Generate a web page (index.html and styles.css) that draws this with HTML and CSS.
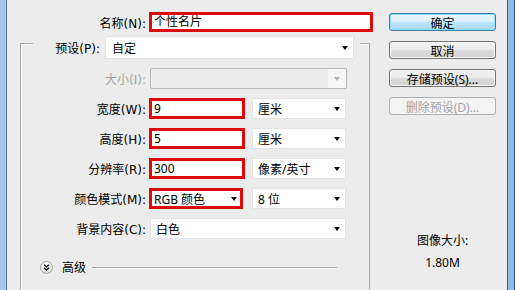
FILE: index.html
```html
<!DOCTYPE html>
<html lang="zh-CN">
  <head>
    <meta charset="UTF-8" />
    <title>新建</title>
    <link rel="stylesheet" href="styles.css">
  </head>
  <body>
    <div class="window">
      <div class="client">
        <!-- left: the form -->
        <div class="form">
          <div class="row name-row">
            <label class="lbl">名称(N):</label>
            <div class="field mark name">个性名片</div>
          </div>
          <div class="group">
            <div class="legend">
              <label class="lbl">预设(P):</label>
              <div class="select preset">自定<span class="arrow"></span></div>
            </div>
            <div class="rows">
              <div class="row">
                <label class="lbl off">大小(I):</label>
                <div class="select disabled size"><span class="arrow"></span></div>
              </div>
              <div class="row">
                <label class="lbl">宽度(W):</label>
                <div class="field mark num">9</div>
                <div class="select unit">厘米<span class="arrow"></span></div>
              </div>
              <div class="row">
                <label class="lbl">高度(H):</label>
                <div class="field mark num">5</div>
                <div class="select unit">厘米<span class="arrow"></span></div>
              </div>
              <div class="row">
                <label class="lbl">分辨率(R):</label>
                <div class="field mark num">300</div>
                <div class="select unit">像素/英寸<span class="arrow"></span></div>
              </div>
              <div class="row">
                <label class="lbl">颜色模式(M):</label>
                <div class="select mark mode">RGB 颜色<span class="arrow"></span></div>
                <div class="select unit bits">8 位<span class="arrow"></span></div>
              </div>
              <div class="row">
                <label class="lbl">背景内容(C):</label>
                <div class="select bg">白色<span class="arrow"></span></div>
              </div>
            </div>
            <div class="advanced">
              <svg class="toggle" width="13" height="13" viewBox="0 0 13 13">
                <defs>
                  <linearGradient id="knob" x1="0" y1="0" x2="0" y2="1">
                    <stop offset="0" stop-color="#ffffff" />
                    <stop offset="1" stop-color="#dedede" />
                  </linearGradient>
                </defs>
                <circle cx="6.5" cy="6.5" r="6" fill="url(#knob)" stroke="#a0a0a0" />
                <path d="M4 3.6 L6.5 6 L9 3.6 M4 6.8 L6.5 9.2 L9 6.8" fill="none" stroke="#111" stroke-width="1.3" />
              </svg>
              <span class="adv-text">高级</span>
              <span class="rule"></span>
            </div>
          </div>
        </div>

        <!-- right: buttons and size -->
        <div class="side">
          <button class="btn default">确定</button>
          <button class="btn">取消</button>
          <button class="btn">存储预设(S)...</button>
          <button class="btn" disabled>删除预设(D)...</button>
          <div class="info">
            <p>图像大小:</p>
            <p>1.80M</p>
          </div>
        </div>
      </div>
    </div>
  </body>
</html>
```

FILE: styles.css
```css
* {
  box-sizing: border-box;
}
html,
body {
  margin: 0;
}
body {
  width: 515px;
  height: 290px;
  overflow: hidden;
  background: #ececec;
  font-family: "Noto Sans", "Noto Sans CJK SC", sans-serif;
  font-size: 12px;
  color: #000;
}

/* window frame */
.window {
  display: flex;
  height: 290px;
  padding: 0 6px;
  background: linear-gradient(90deg, #a9c7ec 0, #a9c7ec 6px, #8dbdec 6px);
  border-right: 1px solid #2c5283;
}
.client {
  flex: 1;
  display: flex;
  background: #ececec;
  border-left: 1px solid #50719a;
  border-right: 1px solid #34598a;
}

/* form column */
.form {
  width: 382px;
  flex: none;
}
.row {
  display: flex;
  align-items: center;
  height: 21px;
}
.lbl {
  flex: none;
  text-align: right;
  white-space: nowrap;
  font-family: "DejaVu Sans", "Noto Sans CJK SC", sans-serif;
}
.lbl.off {
  color: #a2a2a2;
}
.name-row {
  margin-top: 12px;
  height: 20px;
}
.name-row .lbl {
  width: 139px;
  margin-right: 3px;
}

.field {
  height: 21px;
  line-height: 15px;
  background: #fff;
  white-space: nowrap;
}
.mark {
  border: 3px solid #dc0a0a;
  padding-left: 2px;
}
.field.name {
  width: 224px;
  height: 20px;
  line-height: 14px;
}
.field.num {
  width: 96px;
  margin-left: -1px;
}

.select {
  display: flex;
  align-items: center;
  height: 21px;
  padding: 0 5px;
  background: #fff;
  border: 1px solid #e4e4e4;
  white-space: nowrap;
}
.arrow {
  margin-left: auto;
  width: 0;
  height: 0;
  border-top: 4px solid #000;
  border-left: 3.5px solid transparent;
  border-right: 3.5px solid transparent;
}
.select.disabled {
  background: linear-gradient(90deg, #ececec 0, #ececec 177px, #f7f7f7 177px);
  border: 1px solid #b9b9b9;
  border-radius: 2px;
  padding-right: 6px;
}
.select.disabled .arrow {
  border-top-color: #b4b4b4;
}
.select.mark {
  border: 3px solid #dc0a0a;
  padding: 0 3px 0 2px;
}

/* group box with preset as legend */
.group {
  margin: 11px 0 0 13px;
  width: 350px;
  height: 260px;
  border: 1px solid #a9a9a9;
  border-bottom: none;
  box-shadow: inset 1px 1px 0 #fbfbfb;
}
.legend {
  display: flex;
  align-items: center;
  margin: -8px 0 0 12px;
  width: 327px;
  height: 23px;
  padding-right: 6px;
  background: #ececec;
}
.legend .lbl {
  width: 67px;
  margin-right: 5px;
}
.select.preset {
  width: 249px;
  height: 23px;
  padding-left: 6px;
}

.rows {
  display: flex;
  flex-direction: column;
  gap: 9px;
  margin-top: 9px;
}
.rows .lbl {
  width: 125px;
  margin-right: 4px;
}
.select.size {
  width: 197px;
}
.select.unit {
  width: 94px;
  margin-left: 7px;
}
.select.mode {
  width: 94px;
  margin-left: -1px;
}
.select.bits {
  margin-left: 9px;
}
.select.bg {
  width: 196px;
}

.advanced {
  display: flex;
  align-items: center;
  margin: 22px 32px 0 19px;
  height: 13px;
}
.toggle {
  flex: none;
  display: block;
}
.adv-text {
  margin-left: 9px;
  line-height: 13px;
}
.rule {
  flex: 1;
  margin-left: 6px;
  height: 2px;
  border-top: 1px solid #a6a6a6;
  border-bottom: 1px solid #fafafa;
}

/* side column */
.side {
  width: 107px;
  flex: none;
  display: flex;
  flex-direction: column;
  gap: 10px;
  padding-top: 13px;
}
.btn {
  height: 18px;
  padding: 0;
  font: inherit;
  color: #000;
  border: 1px solid #707070;
  border-radius: 3px;
  background: linear-gradient(#f3f3f3 0, #ebebeb 50%, #dddddd 50%, #d0d0d0 100%);
  box-shadow: inset 0 0 0 1px #fcfcfc;
}
.btn.default {
  border-color: #3c7fb1;
  background: linear-gradient(#eaf6fd 0, #d9f0fc 50%, #bee6fd 50%, #a7d9f5 100%);
  box-shadow: inset 0 0 0 1px #8ee0f8;
}
.btn:disabled {
  color: #a3a3a3;
  border-color: #adb2b5;
  background: #f4f4f4;
  box-shadow: none;
}
.info {
  margin-top: 108px;
  text-align: center;
}
.info p {
  margin: 0 0 6px;
  line-height: 16px;
}
```
